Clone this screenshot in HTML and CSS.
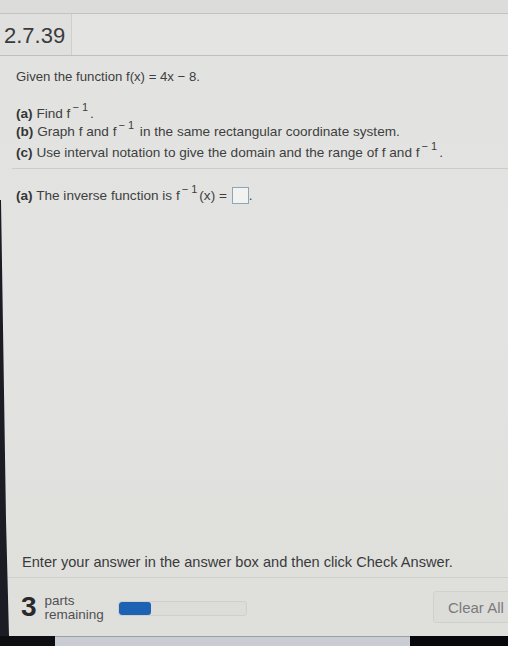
FILE: index.html
```html
<!DOCTYPE html>
<html>
<head>
<meta charset="utf-8">
<link rel="stylesheet" href="styles.css">
</head>
<body>
<div class="screen">
  <div class="topstrip"></div>
  <div class="header">
    <div class="qid">2.7.39</div>
    <div class="hfill"></div>
  </div>
  <div class="content">
    <p class="given">Given the function f(x) = 4x − 8.</p>
    <ul class="parts">
      <li><b>(a)</b> Find f<sup>− 1</sup>.</li>
      <li><b>(b)</b> Graph f and f<sup>− 1</sup> in the same rectangular coordinate system.</li>
      <li><b>(c)</b> Use interval notation to give the domain and the range of f and f<sup>− 1</sup>.</li>
    </ul>
    <div class="rule"></div>
    <p class="answer"><b>(a)</b> The inverse function is f<sup>− 1</sup>(x) = <span class="box"></span>.</p>
  </div>
  <div class="spacer"></div>
  <div class="instr">Enter your answer in the answer box and then click Check Answer.</div>
  <div class="footer">
    <div class="remain">
      <span class="num">3</span>
      <span class="rtxt">parts<br>remaining</span>
    </div>
    <div class="bar"><div class="fill"></div></div>
    <div class="grow"></div>
    <div class="clear">Clear All</div>
  </div>
  <div class="bottom">
    <div class="bl"></div>
    <div class="bm"></div>
    <div class="br"></div>
  </div>
  <div class="edge"></div>
</div>
</body>
</html>
```
FILE: styles.css
```css
html, body {
  margin: 0;
  padding: 0;
}
body {
  background: #e0e1de;
  font-family: "Liberation Sans", Arial, sans-serif;
  color: #3e3e40;
}
.screen {
  position: relative;
  width: 508px;
  height: 646px;
  overflow: hidden;
  display: flex;
  flex-direction: column;
  background: linear-gradient(180deg, #e2e3e0 0%, #e3e4e1 50%, #dedfdb 100%);
}
.topstrip {
  height: 13px;
  flex: none;
  background: #dcdddb;
  border-bottom: 1px solid #c3c4c2;
}
.header {
  height: 41px;
  flex: none;
  display: flex;
  border-bottom: 1px solid #bfc0be;
}
.qid {
  width: 67px;
  padding-left: 4px;
  font-size: 22px;
  line-height: 44px;
  color: #3b3b3e;
  border-right: 1px solid #cfd0ce;
  background: #e0e1de;
}
.hfill {
  flex: 1;
  background: #e4e5e2;
}
.content {
  padding: 0 0 0 16px;
}
.given {
  margin: 13px 0 0;
  font-size: 13.2px;
  line-height: 16px;
}
.parts {
  list-style: none;
  margin: 20px 0 0;
  padding: 0;
  font-size: 13.6px;
}
.parts li {
  line-height: 18px;
}
.parts li:nth-child(3) {
  margin-top: 3px;
}
b {
  font-weight: bold;
  color: #353537;
}
sup {
  font-size: 11px;
  vertical-align: 7px;
  line-height: 0;
  margin-left: 2px;
  margin-right: 2px;
}
.rule {
  height: 1px;
  background: #cbcccb;
  margin: 6px 0 0 -4px;
}
.answer {
  margin: 18px 0 0;
  font-size: 13.6px;
  line-height: 18px;
}
.box {
  display: inline-block;
  width: 15px;
  height: 15px;
  border: 1px solid #8aa6b8;
  background: #f2f3f1;
  vertical-align: -4px;
  margin-left: 1px;
}
.spacer {
  flex: 1;
}
.instr {
  flex: none;
  padding-left: 22px;
  font-size: 14.6px;
  line-height: 20px;
  padding-bottom: 5px;
  border-bottom: 1px solid #cfd0cd;
  color: #3a3a3c;
}
.footer {
  flex: none;
  height: 58px;
  display: flex;
  align-items: center;
  padding-left: 21px;
  background: #dfe0dc;
}
.remain {
  display: flex;
  align-items: center;
  width: 97px;
}
.num {
  font-size: 28px;
  line-height: 28px;
  font-weight: bold;
  color: #2a2a2c;
  margin-right: 8px;
}
.rtxt {
  font-size: 13.5px;
  line-height: 14px;
  color: #505052;
  margin-top: 2px;
}
.bar {
  width: 127px;
  height: 13px;
  border: 1px solid #cfd0cd;
  border-radius: 3px;
  background: #dcdcd9;
  overflow: hidden;
  margin-top: 2px;
}
.fill {
  width: 32px;
  height: 100%;
  background: #1e62b4;
  border-radius: 3px;
}
.grow {
  flex: 1;
}
.clear {
  width: 77px;
  height: 32px;
  line-height: 32px;
  padding-left: 14px;
  box-sizing: border-box;
  margin-right: -2px;
  border: 1px solid #d0d1ce;
  border-radius: 3px;
  background: #dcddd9;
  color: #7a7a7c;
  font-size: 15px;
  white-space: nowrap;
}
.bottom {
  flex: none;
  height: 10px;
  display: flex;
}
.bl {
  width: 55px;
  background: #0e0e12;
}
.bm {
  width: 355px;
  background: #c9cdd3;
  border-top: 1px solid #9aa0a8;
}
.br {
  flex: 1;
  background: #08080c;
}
.edge {
  position: absolute;
  left: 0;
  top: 0;
  width: 12px;
  height: 646px;
  background: #1c1c24;
  clip-path: polygon(0 200px, 1px 200px, 6px 520px, 9px 636px, 0 636px);
}
```
